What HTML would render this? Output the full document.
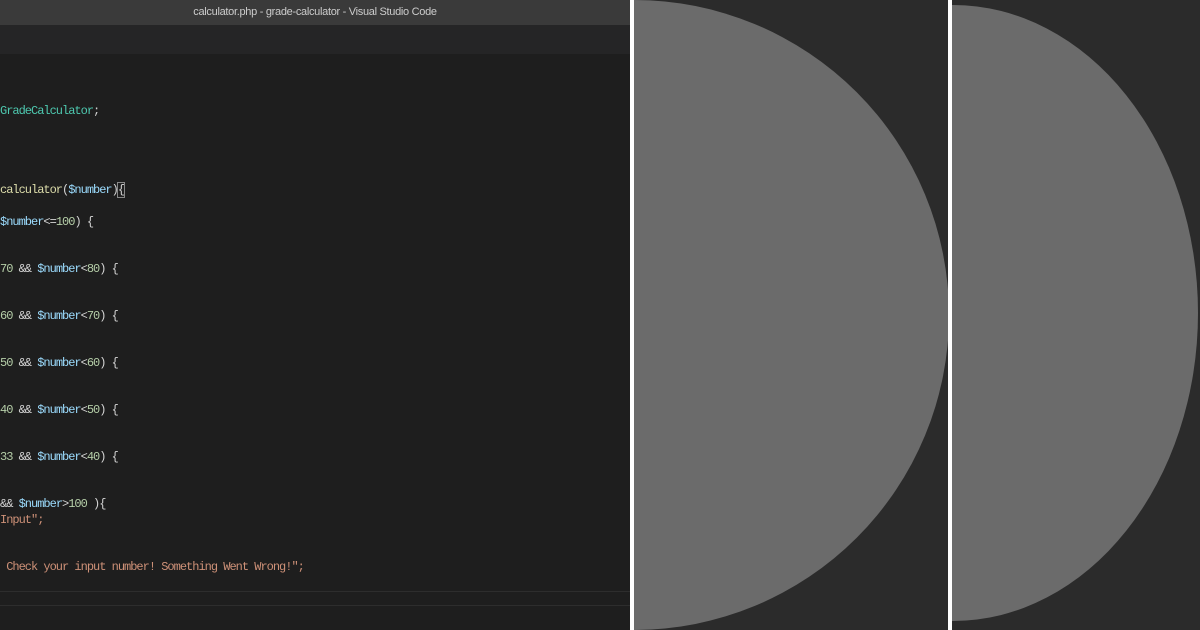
<!DOCTYPE html>
<html><head><style>
body{margin:0;width:1200px;height:630px;overflow:hidden;background:#fff;position:relative;font-family:"Liberation Mono",monospace}
.l{position:absolute;left:0;top:0;width:630px;height:630px;background:#1e1e1e;overflow:hidden}
.tb{position:absolute;left:0;top:0;width:630px;height:25px;background:#3a3a3a;color:#ccc;font:11px "Liberation Sans",sans-serif;text-align:center;line-height:25px;letter-spacing:-0.3px}
.tabs{position:absolute;left:0;top:25px;width:630px;height:29px;background:#252526}
.c{position:absolute;font-size:12px;letter-spacing:-1px;white-space:pre;color:#d4d4d4;line-height:14px}
.g{color:#4ec9b0}.y{color:#dcdcaa}.v{color:#9cdcfe}.n{color:#b5cea8}.s{color:#ce9178}
.hl{position:absolute;left:0;width:630px;height:1px;background:#2d2d2d}
.p{position:absolute;top:0;height:630px;background:#2b2b2b;overflow:hidden}
.circ{position:absolute;width:630px;height:630px;border-radius:50%;background:#6b6b6b;left:-315px;top:0}
.ell{position:absolute;width:490px;height:616px;border-radius:50%;background:#6b6b6b;left:-245px;top:5px}
</style></head><body>
<div class="l">
<div class="tb">calculator.php - grade-calculator - Visual Studio Code</div>
<div class="tabs"></div>
<div class="c" style="left:0;top:104px"><span class="g">GradeCalculator</span>;</div>
<div class="c" style="left:0;top:183px"><span class="y">calculator</span>(<span class="v">$number</span>)<span style="outline:1px solid #888">{</span></div>
<div class="c" style="left:0;top:215px"><span class="v">$number</span>&lt;=<span class="n">100</span>) {</div>
<div class="c" style="left:0;top:262px"><span class="n">70</span> &amp;&amp; <span class="v">$number</span>&lt;<span class="n">80</span>) {</div>
<div class="c" style="left:0;top:309px"><span class="n">60</span> &amp;&amp; <span class="v">$number</span>&lt;<span class="n">70</span>) {</div>
<div class="c" style="left:0;top:356px"><span class="n">50</span> &amp;&amp; <span class="v">$number</span>&lt;<span class="n">60</span>) {</div>
<div class="c" style="left:0;top:403px"><span class="n">40</span> &amp;&amp; <span class="v">$number</span>&lt;<span class="n">50</span>) {</div>
<div class="c" style="left:0;top:450px"><span class="n">33</span> &amp;&amp; <span class="v">$number</span>&lt;<span class="n">40</span>) {</div>
<div class="c" style="left:0;top:497px">&amp;&amp; <span class="v">$number</span>&gt;<span class="n">100</span> ){</div>
<div class="c s" style="left:0;top:513px">Input";</div>
<div class="c s" style="left:0;top:560px"> Check your input number! Something Went Wrong!";</div>
<div class="hl" style="top:591px"></div>
<div class="hl" style="top:605px"></div>
</div>
<div class="p" style="left:634px;width:314px"><div class="circ"></div></div>
<div class="p" style="left:952px;width:248px"><div class="ell" style="left:-244px"></div></div>
</body></html>
